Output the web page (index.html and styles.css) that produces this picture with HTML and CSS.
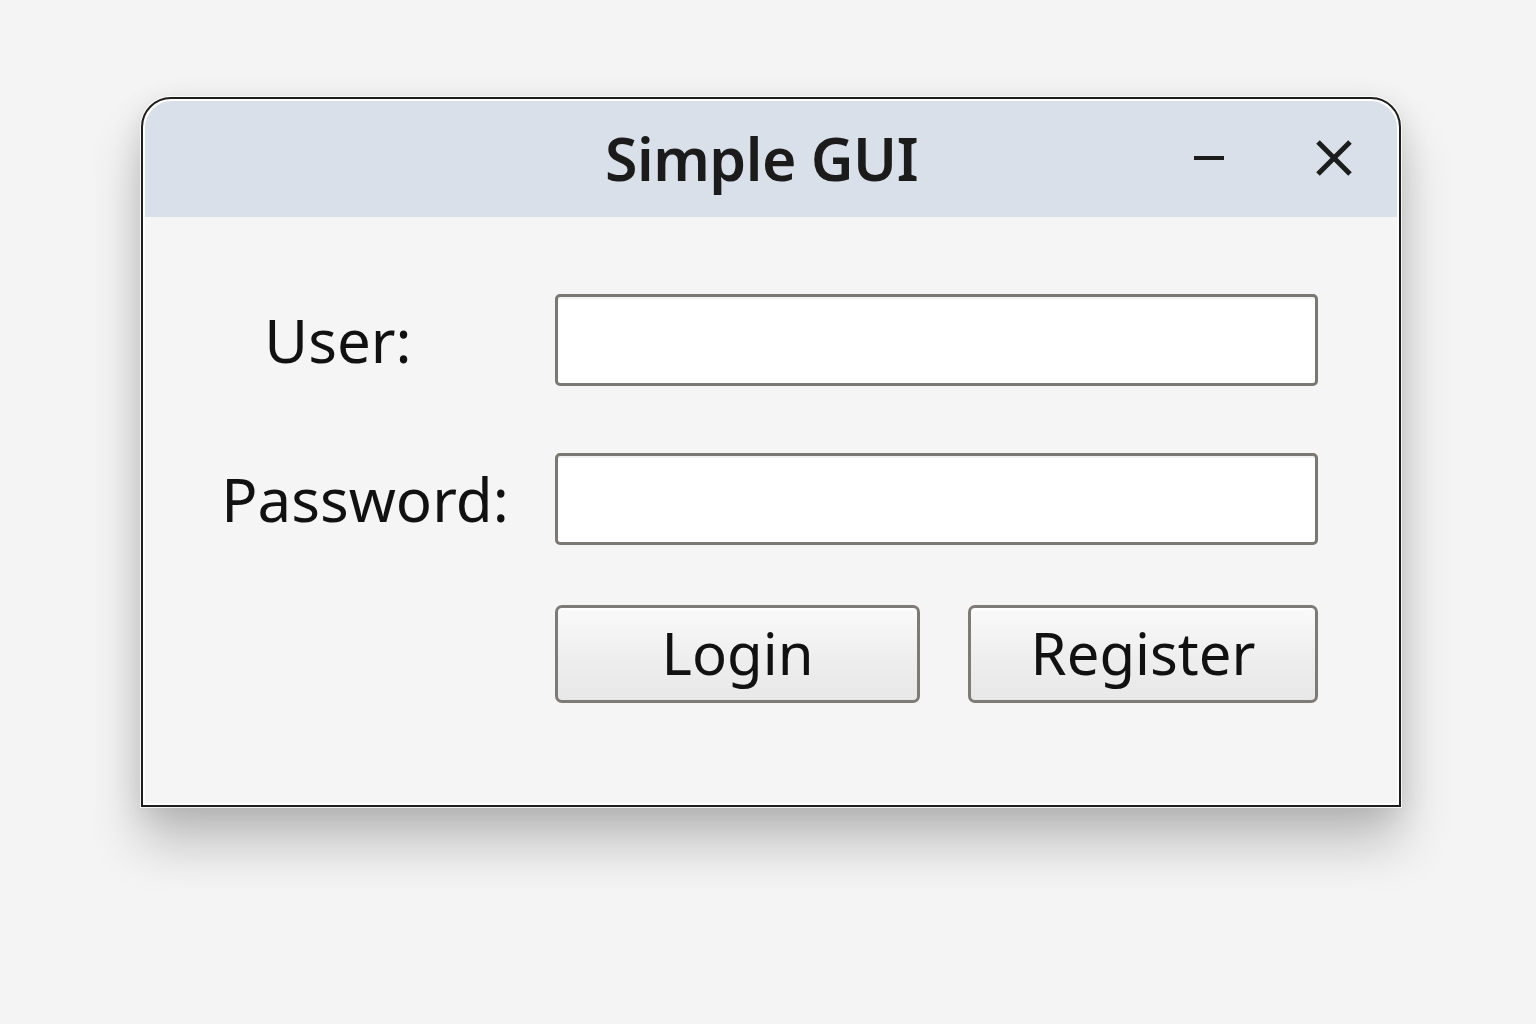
FILE: index.html
```html
<!DOCTYPE html>
<html lang="en">
<head>
<meta charset="utf-8">
<title>Simple GUI</title>
<link rel="stylesheet" href="styles.css">
</head>
<body>
<div class="stage">
  <div class="window">
    <div class="titlebar">
      <div class="title">Simple GUI</div>
      <div class="controls">
        <button class="ctl ctl-min" aria-label="Minimize">
          <svg width="34" height="34" viewBox="0 0 34 34"><rect x="2" y="15" width="30" height="4" fill="#1c1c1c"/></svg>
        </button>
        <button class="ctl ctl-close" aria-label="Close">
          <svg width="38" height="38" viewBox="0 0 38 38"><path d="M3 3 L35 35 M35 3 L3 35" stroke="#1c1c1c" stroke-width="5" stroke-linecap="butt"/></svg>
        </button>
      </div>
    </div>
    <div class="body">
      <div class="row">
        <label class="label label-user">User:</label>
        <input class="field" type="text">
      </div>
      <div class="row">
        <label class="label">Password:</label>
        <input class="field" type="password">
      </div>
      <div class="row row-buttons">
        <div class="label"></div>
        <div class="buttons">
          <button class="btn btn-login">Login</button>
          <button class="btn btn-register">Register</button>
        </div>
      </div>
    </div>
  </div>
</div>
</body>
</html>
```

FILE: styles.css
```css
* { box-sizing: border-box; }
html, body { margin: 0; padding: 0; }
body {
  width: 1536px;
  height: 1024px;
  background: #f4f4f4;
  font-family: "Noto Sans", "Open Sans", "DejaVu Sans", sans-serif;
  color: #111;
  overflow: hidden;
}
.stage {
  padding: 97px 0 0 141px;
}
.window {
  width: 1260px;
  height: 710px;
  border: 2px solid #1d1d1d;
  border-radius: 30px 30px 0 0;
  background: #f5f5f5;
  box-shadow: inset 0 0 0 2px #ffffff, 0 0 0 1px rgba(255,255,255,0.8), 0 36px 52px rgba(0,0,0,0.22), 0 6px 30px rgba(0,0,0,0.10);
  display: flex;
  flex-direction: column;
  padding: 2px;
}
.titlebar {
  height: 116px;
  background: #d9e0e9;
  border-radius: 27px 27px 0 0;
  display: flex;
  align-items: center;
  justify-content: center;
  position: relative;
}
.title {
  font-size: 59px;
  font-weight: 600;
  color: #1b1b1b;
  letter-spacing: -0.5px;
  margin-top: -2px;
  margin-right: 19px;
}
.controls {
  position: absolute;
  right: 44px;
  top: 38px;
  display: flex;
  align-items: center;
  gap: 89px;
}
.ctl {
  border: 0;
  background: transparent;
  padding: 0;
  display: block;
  line-height: 0;
}
.body {
  flex: 1;
  padding: 77px 0 0 0;
  display: flex;
  flex-direction: column;
}
.row {
  display: flex;
  align-items: center;
}
.row + .row { margin-top: 67px; }
.row-buttons { margin-top: 60px !important; }
.label {
  width: 410px;
  flex: 0 0 410px;
  text-align: center;
  font-size: 60px;
  color: #111;
  padding-left: 30px;
}
.label-user { padding-right: 54px; padding-left: 30px; }
.field {
  flex: 0 0 763px;
  width: 763px;
  height: 92px;
  border: 3px solid #7b7772;
  border-radius: 5px;
  background: #ffffff;
  outline: none;
  font-size: 40px;
  box-shadow: inset 0 2px 0 #f2f2f2;
}
.buttons {
  display: flex;
  gap: 48px;
  flex: 0 0 auto;
}
.btn {
  height: 98px;
  border: 3px solid #7e7a76;
  border-radius: 7px;
  background: linear-gradient(#fafafa, #eeeeee 55%, #e8e8e8);
  box-shadow: inset 0 2px 0 #ffffff;
  font-family: inherit;
  font-size: 58px;
  color: #111;
  padding: 0 0 4px;
}
.btn-login { width: 365px; }
.btn-register { width: 350px; }
```
